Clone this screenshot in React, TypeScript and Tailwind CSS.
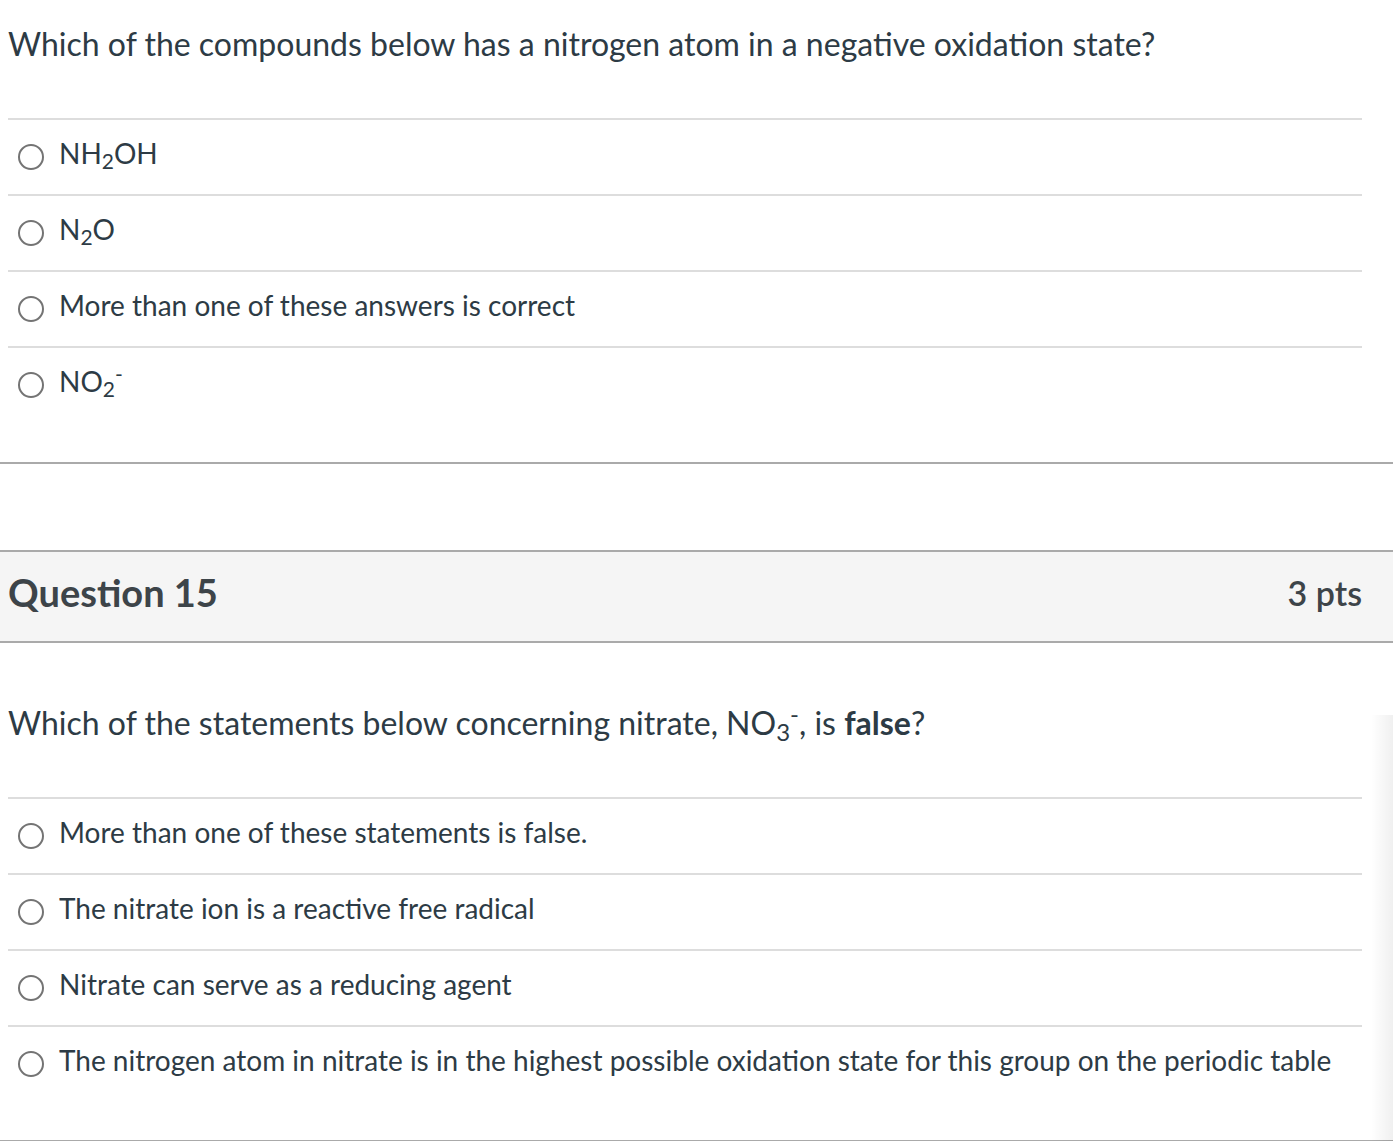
import React from "react";

type Answer = { key: string; label: React.ReactNode };

const q14: Answer[] = [
  { key: "a", label: <>NH<sub>2</sub>OH</> },
  { key: "b", label: <>N<sub>2</sub>O</> },
  { key: "c", label: "More than one of these answers is correct" },
  { key: "d", label: <>NO<sub>2</sub><sup>-</sup></> },
];

const q15: Answer[] = [
  { key: "a", label: "More than one of these statements is false." },
  { key: "b", label: "The nitrate ion is a reactive free radical" },
  { key: "c", label: "Nitrate can serve as a reducing agent" },
  { key: "d", label: "The nitrogen atom in nitrate is in the highest possible oxidation state for this group on the periodic table" },
];

const Radio = () => (
  <span className="ml-[10px] mr-[15px] h-[26px] w-[26px] shrink-0 rounded-full border-2 border-[#747474] bg-white" />
);

const AnswerRow = ({ a }: { a: Answer }) => (
  <div className="flex h-[76px] items-center border-t-2 border-[#dddddd]">
    <Radio />
    <span className="mb-[8px] leading-[34px]">{a.label}</span>
  </div>
);

export default function App() {
  return (
    <div className="relative h-[1141px] w-[1393px] overflow-hidden bg-white font-['Lato',sans-serif] text-[28px] text-[#2d3b45]">
      {/* question 14 (tail) */}
      <div className="pb-[40px] pl-2 pr-[31px]">
        <div className="h-[118px] pt-[21px] text-[32px] leading-[46px]">
          Which of the compounds below has a nitrogen atom in a negative oxidation state?
        </div>
        {q14.map((a) => (
          <AnswerRow key={a.key} a={a} />
        ))}
      </div>
      <div className="h-[88px] border-t-2 border-[#aaaaaa]" />

      {/* question 15 header */}
      <div className="flex h-[93px] items-center justify-between border-y-2 border-[#aaaaaa] bg-[#f5f5f5] pb-[9px] pl-2 pr-[31px]">
        <h2 className="text-[38px] font-bold text-[#3d4449]">Question 15</h2>
        <span className="text-[34px] font-semibold text-[#3d4449]">3 pts</span>
      </div>

      <div className="pb-[39px] pl-2 pr-[31px]">
        <div className="h-[154px] pt-[57px] text-[32px] leading-[46px]">
          Which of the statements below concerning nitrate, NO<sub>3</sub><sup>-</sup>, is <strong className="font-bold">false</strong>?
        </div>
        {q15.map((a) => (
          <AnswerRow key={a.key} a={a} />
        ))}
      </div>
      <div className="border-t-2 border-[#aaaaaa]" />

      {/* edge shadow from a floating panel */}
      <div className="pointer-events-none absolute right-0 top-[715px] h-[426px] w-[22px] bg-gradient-to-r from-transparent to-black/[0.06]" />
    </div>
  );
}
